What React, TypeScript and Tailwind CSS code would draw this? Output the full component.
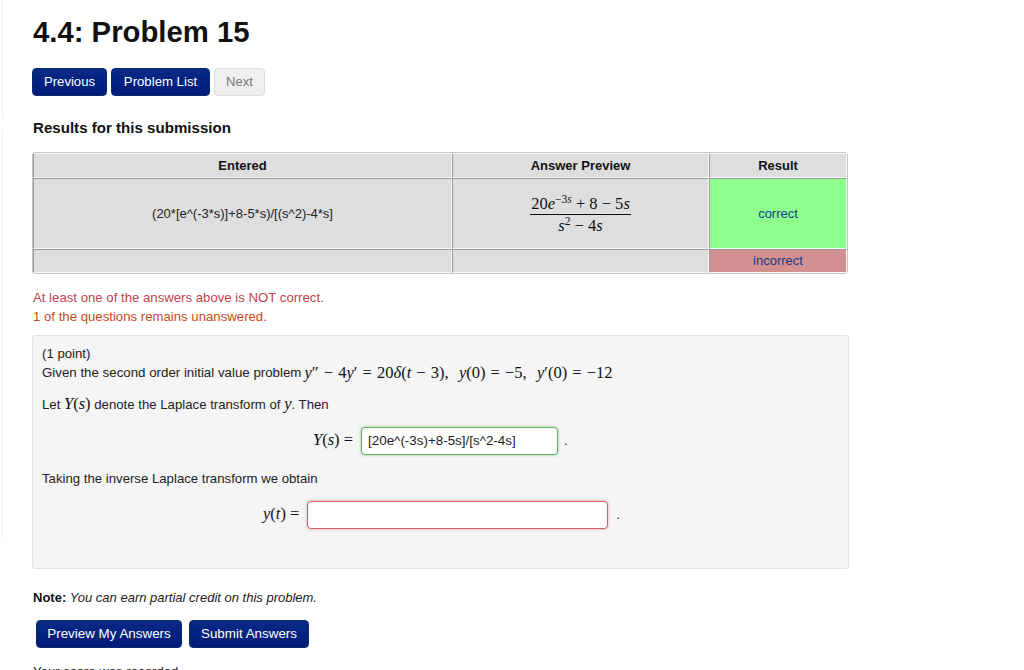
const Btn = ({ children, className }: { children: React.ReactNode; className: string }) => (
  <button className={"h-[28px] rounded-[4px] border border-[#0a2a6e] bg-gradient-to-b from-[#0b2a86] to-[#001a7a] leading-none text-white " + className}>
    {children}
  </button>
);

const V = ({ children }: { children: React.ReactNode }) => <i>{children}</i>;

const math = "font-['Liberation_Serif',serif] text-[16.5px] text-[#111]";
const cell = "border border-[#f8f8f8] border-l-[#999] border-t-[#999]";
const head = "border border-[#f8f8f8] border-l-[#999]";

export default function App() {
  return (
    <div className="relative h-[670px] w-[1024px] overflow-hidden bg-white pl-[32px] font-['Liberation_Sans',Arial,sans-serif] text-[13.2px] text-[#222]">
      <div className="absolute left-0 top-0 h-[118px] w-[3px] border-r border-[#eeeeee]" />
      <div className="absolute left-0 top-[129px] h-[410px] w-[3px] rounded-r-[3px] border-r border-[#eeeeee]" />
      <h1 className="pl-[1px] pt-[14px] text-[29.3px] font-bold leading-[36px] text-[#111]">4.4: Problem 15</h1>
      <div className="mt-[18px] flex">
        <Btn className="w-[75px] text-[13.1px]">Previous</Btn>
        <Btn className="ml-[4px] w-[99px] text-[13.2px]">Problem List</Btn>
        <button className="ml-[4px] h-[28px] w-[51px] rounded-[4px] border border-[#ddd] bg-[#efefef] text-[13.1px] leading-none text-[#777]">Next</button>
      </div>
      <h2 className="mt-[23px] pl-[1px] text-[15.1px] font-bold leading-[18px] text-[#111]">Results for this submission</h2>

      <table className="mt-[15px] w-[816px] table-fixed border-separate border-spacing-0 rounded-[3px] border border-[#c4c4c4] text-center text-[13px]">
        <colgroup>
          <col className="w-[419px]" />
          <col className="w-[257px]" />
          <col />
        </colgroup>
        <tbody>
          <tr className="h-[25px] bg-[#dedede] font-bold text-[#111]">
            <td className={head}>Entered</td>
            <td className={head}>Answer Preview</td>
            <td className={head}>Result</td>
          </tr>
          <tr className="h-[71px] bg-[#dedede]">
            <td className={cell}>(20*[e^(-3*s)]+8-5*s)/[(s^2)-4*s]</td>
            <td className={cell + " " + math}>
              <span className="inline-flex flex-col items-center">
                <span className="border-b border-[#111] px-[1px] pb-[1px] leading-[19px]">
                  20<V>e</V><sup className="text-[11.5px]">−3<V>s</V></sup> + 8 − 5<V>s</V>
                </span>
                <span className="pt-[1px] leading-[20px]">
                  <V>s</V><sup className="text-[11.5px]">2</sup> − 4<V>s</V>
                </span>
              </span>
            </td>
            <td className={cell + " bg-[#8cff8c] text-[#1a3a8a]"}>correct</td>
          </tr>
          <tr className="h-[24px] bg-[#dedede]">
            <td className={cell} />
            <td className={cell} />
            <td className={cell + " bg-[#d39090] text-[#1a3a8a]"}>incorrect</td>
          </tr>
        </tbody>
      </table>

      <p className="mt-[14px] pl-[1px] leading-[19px] text-[#c0434a]">At least one of the answers above is NOT correct.</p>
      <p className="pl-[1px] leading-[19px] text-[#c8491c]">1 of the questions remains unanswered.</p>

      <div className="mt-[9px] h-[234px] w-[817px] rounded-[3px] border border-[#e3e3e3] bg-[#f5f5f5] pl-[9px] pt-[9px]">
        <p className="leading-[18px]">(1 point)</p>
        <p className="flex h-[19px] items-center leading-[19px]">
          <span className="text-[13.3px]">Given the second order initial value problem</span>
          <span className={"ml-[3px] [word-spacing:1px] " + math}>
            <V>y</V>″ − 4<V>y</V>′ = 20<V>δ</V>(<V>t</V> − 3),&nbsp;&nbsp;<V>y</V>(0) = −5,&nbsp;&nbsp;<V>y</V>′(0) = −12
          </span>
        </p>
        <p className="mt-[12px] leading-[19px]">
          Let <span className={math}><V>Y</V>(<V>s</V>)</span> denote the Laplace transform of <span className={math}><V>y</V></span>. Then
        </p>
        <div className="mt-[13px] flex h-[28px] items-center">
          <span className={"-mt-[2px] ml-[271px] " + math}><V>Y</V>(<V>s</V>) =</span>
          <div className="ml-[8px] flex h-[28px] w-[197px] items-center rounded-[4px] border border-[#5cb85c] bg-white pl-[6px] text-[13.4px] shadow-[0_0_3px_rgba(70,136,71,0.5)]">[20e^(-3s)+8-5s]/[s^2-4s]</div>
          <span className="ml-[6px]">.</span>
        </div>
        <p className="mt-[14px] leading-[19px]">Taking the inverse Laplace transform we obtain</p>
        <div className="mt-[13px] flex h-[28px] items-center">
          <span className={"-mt-[2px] ml-[221px] " + math}><V>y</V>(<V>t</V>) =</span>
          <div className="ml-[8px] h-[28px] w-[301px] rounded-[4px] border border-[#d9606a] bg-white shadow-[0_0_3px_rgba(185,74,72,0.5)]" />
          <span className="ml-[8px]">.</span>
        </div>
      </div>

      <p className="mt-[19px] pl-[1px] text-[13px] leading-[19px]"><b className="text-[#111]">Note:</b> <i>You can earn partial credit on this problem.</i></p>
      <div className="ml-[4px] mt-[13px] flex gap-[7px]">
        <Btn className="w-[146px] text-[13.4px]">Preview My Answers</Btn>
        <Btn className="w-[120px] text-[13.4px]">Submit Answers</Btn>
      </div>
      <p className="mt-[14px] pl-[1px] leading-[19px]">Your score was recorded.</p>
    </div>
  );
}
